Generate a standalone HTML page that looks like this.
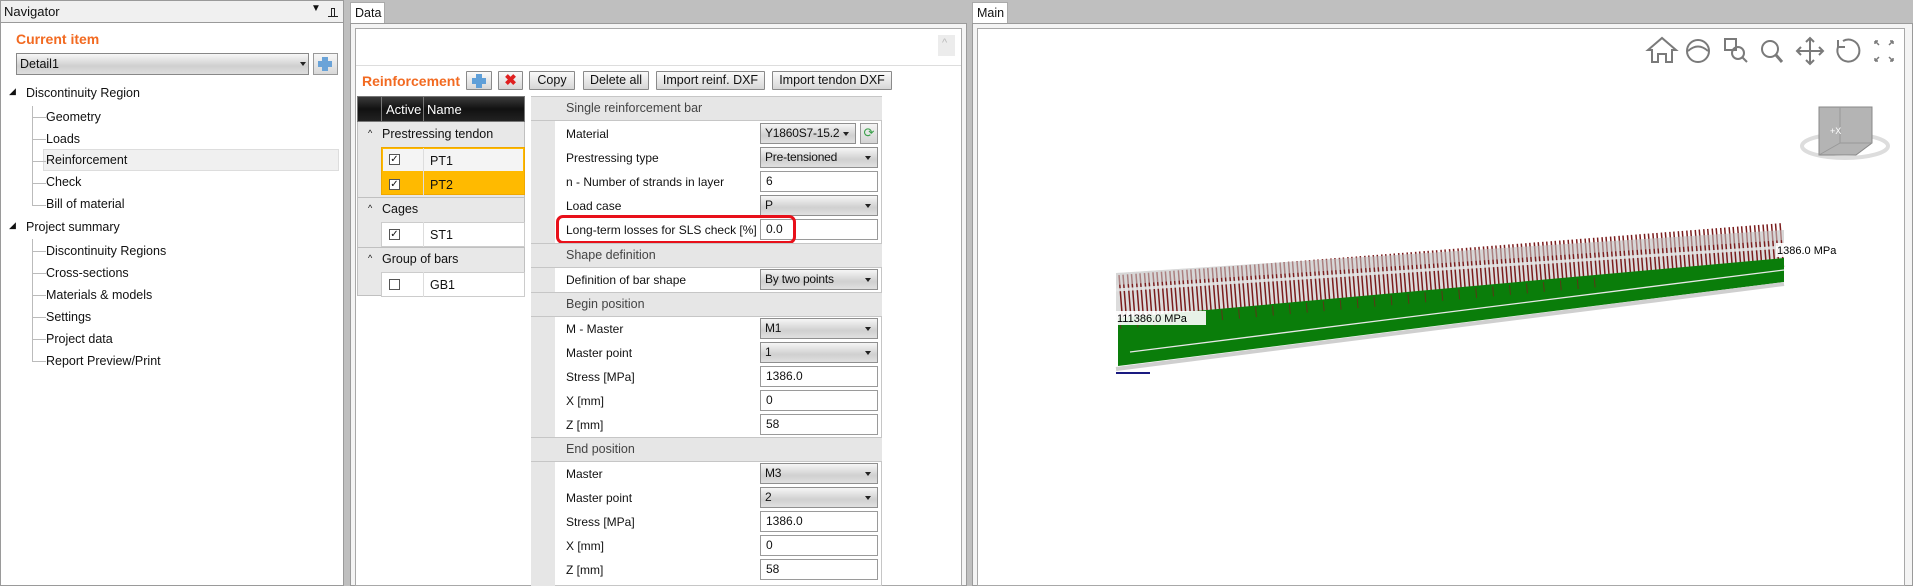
<!DOCTYPE html>
<html><head><meta charset="utf-8">
<style>
*{margin:0;padding:0;box-sizing:border-box}
body{width:1913px;height:586px;overflow:hidden;background:#bfbfbf;font-family:"Liberation Sans",sans-serif;font-size:12.5px;color:#111;position:relative}
.a{position:absolute}
.t{position:absolute;white-space:nowrap}
.btn{position:absolute;height:19px;border:1px solid #8a8a8a;background:linear-gradient(#fafafa,#d6d6d6);font-size:12.5px;text-align:center;line-height:17px;border-radius:1px}
.dd{position:absolute;left:760px;width:118px;height:21px;border:1px solid #8f8f8f;background:linear-gradient(#f6f6f6,#d0d0d0 60%,#e0e0e0);padding-left:4px;line-height:19px;font-size:12px;letter-spacing:-0.2px}
.dd:after{content:"";position:absolute;right:6px;top:8px;border-left:3px solid transparent;border-right:3px solid transparent;border-top:4px solid #222}
.tb{position:absolute;left:760px;width:118px;height:21px;border:1px solid #9a9a9a;background:#fff;padding-left:5px;line-height:19px;font-size:12px}
.hd{position:absolute;left:531px;width:351px;height:25px;background:#e6e6e6;border-top:1px solid #c6c6c6;border-bottom:1px solid #c6c6c6;padding-left:35px;line-height:23px;color:#444;font-size:12.5px}
.lb{position:absolute;left:566px;line-height:24px;font-size:12px;white-space:nowrap}
.nv{position:absolute;line-height:16px;font-size:12.5px}
.hl{position:absolute;width:14px;height:1px;background:#bbb}
.cb{position:absolute;width:11px;height:11px;border:1px solid #555;background:#fff;font-size:10px;line-height:9px;text-align:center}
</style></head><body>

<!-- Navigator -->
<div class="a" style="left:0;top:0;width:344px;height:586px;background:#fff;border:1px solid #9a9a9a"></div>
<div class="a" style="left:0;top:0;width:344px;height:23px;background:#f0f0f0;border:1px solid #9a9a9a"></div>
<div class="t" style="left:4px;top:4px;font-size:13px">Navigator</div>
<div class="t" style="left:311px;top:3px;font-size:10px">▼</div>
<div class="a" style="left:331px;top:8px;width:4px;height:9px;border:1px solid #222"></div>
<div class="a" style="left:328px;top:16px;width:10px;height:1px;background:#222"></div>
<div class="t" style="left:16px;top:31px;font-size:14px;font-weight:bold;color:#f26a21">Current item</div>
<div class="a" style="left:16px;top:53px;width:293px;height:22px;border:1px solid #888;background:linear-gradient(#f7f7f7,#cfcfcf 60%,#dedede)"></div>
<div class="t" style="left:20px;top:57px">Detail1</div>
<div class="a" style="left:300px;top:62px;border-left:3px solid transparent;border-right:3px solid transparent;border-top:4px solid #222"></div>
<div class="a" style="left:313px;top:53px;width:25px;height:22px;border:1px solid #999;background:linear-gradient(#f7f7f7,#d8d8d8)"></div>
<div class="a" style="left:322px;top:57px;width:6px;height:14px;background:#6aa3d8"></div>
<div class="a" style="left:318px;top:61px;width:14px;height:6px;background:#6aa3d8"></div>
<div class="a" style="left:43px;top:149px;width:296px;height:22px;background:#f0f0f0;border:1px solid #ddd"></div>
<div class="a" style="left:32px;top:106px;width:1px;height:99px;background:#bbb"></div>
<div class="a" style="left:32px;top:239px;width:1px;height:122px;background:#bbb"></div>
<div class="t" style="left:9px;top:86px;font-size:9px">◢</div>
<div class="nv" style="left:26px;top:85px">Discontinuity Region</div>
<div class="hl" style="left:32px;top:117px"></div><div class="nv" style="left:46px;top:109px">Geometry</div>
<div class="hl" style="left:32px;top:139px"></div><div class="nv" style="left:46px;top:131px">Loads</div>
<div class="hl" style="left:32px;top:161px"></div><div class="nv" style="left:46px;top:152px">Reinforcement</div>
<div class="hl" style="left:32px;top:183px"></div><div class="nv" style="left:46px;top:174px">Check</div>
<div class="hl" style="left:32px;top:205px"></div><div class="nv" style="left:46px;top:196px">Bill of material</div>
<div class="t" style="left:9px;top:220px;font-size:9px">◢</div>
<div class="nv" style="left:26px;top:219px">Project summary</div>
<div class="hl" style="left:32px;top:251px"></div><div class="nv" style="left:46px;top:243px">Discontinuity Regions</div>
<div class="hl" style="left:32px;top:273px"></div><div class="nv" style="left:46px;top:265px">Cross-sections</div>
<div class="hl" style="left:32px;top:295px"></div><div class="nv" style="left:46px;top:287px">Materials &amp; models</div>
<div class="hl" style="left:32px;top:317px"></div><div class="nv" style="left:46px;top:309px">Settings</div>
<div class="hl" style="left:32px;top:339px"></div><div class="nv" style="left:46px;top:331px">Project data</div>
<div class="hl" style="left:32px;top:361px"></div><div class="nv" style="left:46px;top:353px">Report Preview/Print</div>

<!-- Data panel -->
<div class="a" style="left:350px;top:2px;width:35px;height:22px;background:#fff;border:1px solid #aaa;border-bottom:none"></div>
<div class="t" style="left:355px;top:6px">Data</div>
<div class="a" style="left:350px;top:23px;width:617px;height:563px;background:#f4f4f4;border:1px solid #9a9a9a"></div>
<div class="a" style="left:355px;top:28px;width:607px;height:558px;background:#fff;border:1px solid #a8a8a8"></div>
<div class="a" style="left:356px;top:65px;width:605px;height:1px;background:#ddd"></div>
<div class="a" style="left:938px;top:35px;width:17px;height:21px;background:#ececec"></div>
<div class="t" style="left:942px;top:37px;color:#bbb;font-size:11px">^</div>

<div class="t" style="left:362px;top:73px;font-size:14px;font-weight:bold;color:#f26a21">Reinforcement</div>
<div class="btn" style="left:466px;top:71px;width:26px"></div>
<div class="a" style="left:476px;top:74px;width:6px;height:14px;background:#5f9fd8"></div>
<div class="a" style="left:472px;top:78px;width:14px;height:6px;background:#5f9fd8"></div>
<div class="btn" style="left:498px;top:71px;width:25px;color:#e02020;font-weight:bold;font-size:15px">✖</div>
<div class="btn" style="left:529px;top:71px;width:46px">Copy</div>
<div class="btn" style="left:583px;top:71px;width:66px">Delete all</div>
<div class="btn" style="left:656px;top:71px;width:109px">Import reinf. DXF</div>
<div class="btn" style="left:772px;top:71px;width:120px">Import tendon DXF</div>

<!-- left table -->
<div class="a" style="left:357px;top:96px;width:168px;height:200px;background:#e8e8e8;border:1px solid #c0c0c0"></div>
<div class="a" style="left:357px;top:96px;width:168px;height:26px;background:linear-gradient(#3a3a3a,#111 50%,#222);border:1px solid #777"></div>
<div class="a" style="left:381px;top:97px;width:1px;height:24px;background:#777"></div>
<div class="a" style="left:423px;top:97px;width:1px;height:24px;background:#777"></div>
<div class="t" style="left:386px;top:102px;color:#fff;font-size:13px">Active</div>
<div class="t" style="left:427px;top:102px;color:#fff;font-size:13px">Name</div>
<div class="t" style="left:368px;top:128px;font-size:9px">^</div>
<div class="t" style="left:382px;top:127px">Prestressing tendon</div>
<div class="a" style="left:381px;top:147px;width:144px;height:48px;background:#ffba00;border:1px solid #f0a800"></div>
<div class="a" style="left:383px;top:149px;width:140px;height:22px;background:#f4f4f4"></div>
<div class="a" style="left:423px;top:148px;width:1px;height:47px;background:#ddd"></div>
<div class="cb" style="left:389px;top:154px">✓</div><div class="t" style="left:430px;top:154px">PT1</div>
<div class="cb" style="left:389px;top:179px">✓</div><div class="t" style="left:430px;top:178px">PT2</div>
<div class="a" style="left:357px;top:197px;width:168px;height:1px;background:#c0c0c0"></div>
<div class="t" style="left:368px;top:203px;font-size:9px">^</div>
<div class="t" style="left:382px;top:202px">Cages</div>
<div class="a" style="left:381px;top:222px;width:144px;height:25px;background:#fff;border:1px solid #ccc"></div>
<div class="a" style="left:423px;top:222px;width:1px;height:25px;background:#ddd"></div>
<div class="cb" style="left:389px;top:229px">✓</div><div class="t" style="left:430px;top:228px">ST1</div>
<div class="a" style="left:357px;top:247px;width:168px;height:1px;background:#c0c0c0"></div>
<div class="t" style="left:368px;top:253px;font-size:9px">^</div>
<div class="t" style="left:382px;top:252px">Group of bars</div>
<div class="a" style="left:381px;top:272px;width:144px;height:25px;background:#fff;border:1px solid #ccc"></div>
<div class="a" style="left:423px;top:272px;width:1px;height:25px;background:#ddd"></div>
<div class="cb" style="left:389px;top:279px"></div><div class="t" style="left:430px;top:278px">GB1</div>

<!-- properties -->
<div class="a" style="left:531px;top:96px;width:351px;height:490px;background:#fff;border:1px solid #c6c6c6"></div>
<div class="a" style="left:531px;top:96px;width:24px;height:490px;background:#e6e6e6"></div>
<div class="hd" style="top:96px">Single reinforcement bar</div>
<div class="lb" style="top:122px">Material</div>
<div class="dd" style="top:123px;width:96px">Y1860S7-15.2</div>
<div class="a" style="left:860px;top:123px;width:18px;height:21px;border:1px solid #999;background:linear-gradient(#f4f4f4,#d4d4d4);color:#3aa04a;font-size:13px;text-align:center;line-height:18px">⟳</div>
<div class="lb" style="top:146px">Prestressing type</div><div class="dd" style="top:147px">Pre-tensioned</div>
<div class="lb" style="top:170px">n - Number of strands in layer</div><div class="tb" style="top:171px">6</div>
<div class="lb" style="top:194px">Load case</div><div class="dd" style="top:195px">P</div>
<div class="lb" style="top:218px">Long-term losses for SLS check [%]</div><div class="tb" style="top:219px">0.0</div>
<div class="a" style="left:556px;top:215px;width:240px;height:29px;border:3px solid #e8101a;border-radius:7px"></div>
<div class="hd" style="top:243px">Shape definition</div>
<div class="lb" style="top:268px">Definition of bar shape</div><div class="dd" style="top:269px">By two points</div>
<div class="hd" style="top:292px">Begin position</div>
<div class="lb" style="top:317px">M - Master</div><div class="dd" style="top:318px">M1</div>
<div class="lb" style="top:341px">Master point</div><div class="dd" style="top:342px">1</div>
<div class="lb" style="top:365px">Stress [MPa]</div><div class="tb" style="top:366px">1386.0</div>
<div class="lb" style="top:389px">X [mm]</div><div class="tb" style="top:390px">0</div>
<div class="lb" style="top:413px">Z [mm]</div><div class="tb" style="top:414px">58</div>
<div class="hd" style="top:437px">End position</div>
<div class="lb" style="top:462px">Master</div><div class="dd" style="top:463px">M3</div>
<div class="lb" style="top:486px">Master point</div><div class="dd" style="top:487px">2</div>
<div class="lb" style="top:510px">Stress [MPa]</div><div class="tb" style="top:511px">1386.0</div>
<div class="lb" style="top:534px">X [mm]</div><div class="tb" style="top:535px">0</div>
<div class="lb" style="top:558px">Z [mm]</div><div class="tb" style="top:559px">58</div>

<!-- Main panel -->
<div class="a" style="left:972px;top:2px;width:36px;height:22px;background:#fff;border:1px solid #aaa;border-bottom:none"></div>
<div class="t" style="left:977px;top:6px">Main</div>
<div class="a" style="left:972px;top:23px;width:941px;height:563px;background:#f4f4f4;border:1px solid #9a9a9a"></div>
<div class="a" style="left:977px;top:28px;width:928px;height:558px;background:#fff;border:1px solid #a8a8a8"></div>

<svg class="a" style="left:0;top:0" width="1913" height="586" viewBox="0 0 1913 586">
 <g fill="none" stroke="#7a7a7a" stroke-width="2">
  <path d="M1652 62 V50 H1648 L1662 38 L1676 50 H1672 V62 H1666 V54 H1658 V62 Z"/>
  <circle cx="1698" cy="51" r="11"/><path d="M1688 51 Q1698 42 1708 51"/>
  <rect x="1725" y="39" width="11" height="11"/><circle cx="1738" cy="53" r="6"/><path d="M1742 57 L1747 62"/>
  <circle cx="1770" cy="49" r="8"/><path d="M1776 55 L1782 62" stroke-width="3"/>
  <path d="M1810 38 V64 M1797 51 H1823 M1806 42 L1810 38 L1814 42 M1806 60 L1810 64 L1814 60 M1801 47 L1797 51 L1801 55 M1819 47 L1823 51 L1819 55"/>
  <path d="M1843 41 A11 11 0 1 1 1838 47 M1838 40 V47 H1845"/>
  <path d="M1875 41 L1879 45 M1875 41 h3 M1875 41 v3 M1893 41 L1889 45 M1893 41 h-3 M1893 41 v3 M1875 61 L1879 57 M1875 61 h3 M1875 61 v-3 M1893 61 L1889 57 M1893 61 h-3 M1893 61 v-3" stroke-width="1.5"/>
 </g>
 <ellipse cx="1845" cy="146" rx="43" ry="12" fill="none" stroke="#ddd" stroke-width="4"/>
 <path d="M1819 107 L1872 107 L1872 143 L1856 155 L1819 155 Z" fill="#b4b4b4" stroke="#888"/>
 <path d="M1840 107 V143 L1819 155 M1840 143 H1872" stroke="#999" fill="none"/>
 <text x="1830" y="134" font-size="9" fill="#fff" font-family="Liberation Sans">+X</text>

 <!-- beam -->
 <polygon points="1116,273 1784,230 1784,258 1116,320" fill="#dcdcdc"/>
 <line x1="1120" y1="297" x2="1784" y2="245" stroke="#7a1c1c" stroke-width="44" stroke-dasharray="1.5 2.5 1.5 3"/>
 <polygon points="1116,273 1784,230 1784,240 1116,285" fill="#d4d4d4" opacity="0.55"/>
 <line x1="1116" y1="290" x2="1784" y2="247" stroke="#e4e4e4" stroke-width="3" opacity="0.9"/>
 <polygon points="1118,318 1784,258 1784,282 1118,366" fill="#0a7d0a"/>
 <line x1="1120" y1="324" x2="1600" y2="282" stroke="#7a1c1c" stroke-width="10" stroke-dasharray="1 16" opacity="0.7"/>
 <line x1="1130" y1="352" x2="1784" y2="270" stroke="#e8e8e8" stroke-width="1.3"/>
 <line x1="1116" y1="369" x2="1784" y2="284" stroke="#cfcfcf" stroke-width="4"/>
 <line x1="1116" y1="373" x2="1150" y2="373" stroke="#1a1a80" stroke-width="2"/>
 <rect x="1116" y="311" width="90" height="14" fill="#fff" opacity="0.9"/>
 <text x="1117" y="322" font-size="11" font-family="Liberation Sans" fill="#000">111386.0 MPa</text>
 <rect x="1776" y="243" width="68" height="14" fill="#fff" opacity="0.9"/>
 <text x="1777" y="254" font-size="11" font-family="Liberation Sans" fill="#000">1386.0 MPa</text>
</svg>
</body></html>
